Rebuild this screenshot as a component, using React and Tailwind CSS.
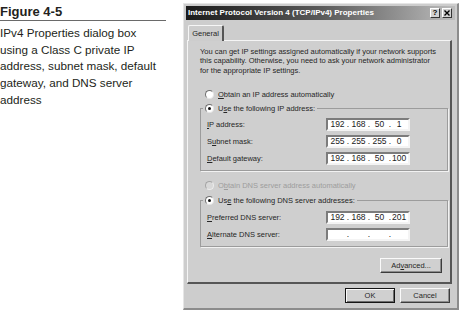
import React from 'react';

const Radio = ({ checked, disabled }) => (
  <span
    className={
      disabled
        ? 'w-[9px] h-[9px] shrink-0 rounded-full bg-[#d8d8d8] border border-[#a5a5a5] border-b-[#ececec] border-r-[#ececec] flex items-center justify-center'
        : 'w-[9px] h-[9px] shrink-0 rounded-full bg-white border border-[#6f6f6f] border-b-[#e6e6e6] border-r-[#e6e6e6] flex items-center justify-center'
    }
  >
    {checked && <span className="w-[3px] h-[3px] rounded-full bg-[#111]" />}
  </span>
);

const Key = ({ children }) => <span className="underline underline-offset-1 decoration-1">{children}</span>;

const IpBox = ({ parts }) => (
  <div className="w-[84px] h-[13px] bg-white border-2 border-t-[#7c7c7c] border-l-[#7c7c7c] border-b-[#f4f4f4] border-r-[#f4f4f4] flex items-center pl-[1px] text-[8.5px] leading-none text-[#222]">
    <span className="w-[17px] text-center">{parts[0]}</span>
    <span className="w-[4px] text-center">.</span>
    <span className="w-[17px] text-center">{parts[1]}</span>
    <span className="w-[4px] text-center">.</span>
    <span className="w-[17px] text-center">{parts[2]}</span>
    <span className="w-[4px] text-center">.</span>
    <span className="w-[14px] text-center">{parts[3]}</span>
  </div>
);

const Row = ({ label, parts }) => (
  <div className="h-[17px] flex items-center pl-[6px]">
    <span className="w-[119px] shrink-0">{label}</span>
    <IpBox parts={parts} />
  </div>
);

const Button = ({ children, primary, className }) => (
  <div
    className={
      primary
        ? `h-[15px] flex items-center justify-center bg-[#d0d0d0] border border-[#151515] shadow-[inset_1px_1px_0_#fafafa,inset_-1px_-1px_0_#6c6c6c] ${className}`
        : `h-[15px] flex items-center justify-center bg-[#d0d0d0] border border-t-[#fafafa] border-l-[#fafafa] border-r-[#3c3c3c] border-b-[#3c3c3c] shadow-[inset_-1px_-1px_0_#8c8c8c] ${className}`
    }
  >
    {children}
  </div>
);

const Caption = () => (
  <div className="w-[183px] shrink-0 pt-[4px] text-[#231f20]">
    <div className="w-[166px] border-b border-[#6a6a6a] text-[13px] leading-[16px] font-bold">Figure 4-5</div>
    <p className="mt-[4px] text-[11.7px] leading-[16.7px]">
      IPv4 Properties dialog box
      <br />
      using a Class C private IP
      <br />
      address, subnet mask, default
      <br />
      gateway, and DNS server
      <br />
      address
    </p>
  </div>
);

const Dialog = () => (
  <div className="mt-[3px] w-[276px] h-[307px] shrink-0 bg-[#cdcdcd] border-l border-t border-[#e6e6e6] border-r-2 border-b-2 border-r-[#8c8c8c] border-b-[#8c8c8c] pt-[2px] px-[2px] flex flex-col text-[7.5px] text-[#262626]">
    {/* title bar */}
    <div className="h-[14px] shrink-0 flex items-center bg-linear-to-r from-[#1c1c1c] via-[#5a5a5a] to-[#bdbdbd] pl-[2px] pr-[3px]">
      <span className="flex-1 text-white font-bold text-[8px] leading-none whitespace-nowrap">
        Internet Protocol Version 4 (TCP/IPv4) Properties
      </span>
      <div className="flex gap-[2px]">
        <div className="w-[10px] h-[10px] bg-[#d2d2d2] border border-t-white border-l-white border-r-[#333] border-b-[#333] flex items-center justify-center text-[8px] font-bold leading-none text-black">
          ?
        </div>
        <div className="w-[10px] h-[10px] bg-[#d2d2d2] border border-t-white border-l-white border-r-[#333] border-b-[#333] flex items-center justify-center">
          <svg width="6" height="6" viewBox="0 0 6 6">
            <path d="M0.5 0.5 L5.5 5.5 M5.5 0.5 L0.5 5.5" stroke="#000" strokeWidth="1.4" />
          </svg>
        </div>
      </div>
    </div>

    {/* tab */}
    <div className="mt-[5px] h-[15px] flex">
      <div className="relative z-10 ml-[2px] w-[36px] h-[16px] bg-[#cdcdcd] border-t border-l border-[#f6f6f6] border-r-2 border-r-[#555] rounded-t-[2px] flex items-center justify-center">
        General
      </div>
    </div>

    {/* panel */}
    <div className="ml-[1px] mr-[3px] bg-[#cfcfcf] border-t border-l border-[#f5f5f5] border-r-2 border-b-2 border-r-[#565656] border-b-[#565656] pt-[6px] pl-[12px] pr-[2px] pb-[9px] flex flex-col">
      <p className="leading-[9.4px] whitespace-nowrap">
        You can get IP settings assigned automatically if your network supports
        <br />
        this capability. Otherwise, you need to ask your network administrator
        <br />
        for the appropriate IP settings.
      </p>

      <div className="mt-[13px] h-[12px] flex items-center gap-[4px] pl-[5px]">
        <Radio />
        <span>
          <Key>O</Key>btain an IP address automatically
        </span>
      </div>

      <fieldset className="mt-[2px] border border-[#9c9c9c] shadow-[1px_1px_0_#f2f2f2] pb-[3px]">
        <legend className="ml-[2px] px-[2px] bg-[#cfcfcf]">
          <span className="h-[12px] flex items-center gap-[4px]">
            <Radio checked />
            <span>
              U<Key>s</Key>e the following IP address:
            </span>
          </span>
        </legend>
        <div className="pt-[2px]">
          <Row label={<><Key>I</Key>P address:</>} parts={['192', '168', '50', '1']} />
          <Row label={<>S<Key>u</Key>bnet mask:</>} parts={['255', '255', '255', '0']} />
          <Row label={<><Key>D</Key>efault gateway:</>} parts={['192', '168', '50', '100']} />
        </div>
      </fieldset>

      <div className="mt-[8px] h-[12px] flex items-center gap-[4px] pl-[5px] text-[#9d9d9d]">
        <Radio disabled />
        <span>
          O<Key>b</Key>tain DNS server address automatically
        </span>
      </div>

      <fieldset className="mt-[3px] border border-[#9c9c9c] shadow-[1px_1px_0_#f2f2f2] pb-[3px]">
        <legend className="ml-[2px] px-[2px] bg-[#cfcfcf]">
          <span className="h-[12px] flex items-center gap-[4px]">
            <Radio checked />
            <span>
              Us<Key>e</Key> the following DNS server addresses:
            </span>
          </span>
        </legend>
        <div className="pt-[3px]">
          <Row label={<><Key>P</Key>referred DNS server:</>} parts={['192', '168', '50', '201']} />
          <Row label={<><Key>A</Key>lternate DNS server:</>} parts={['', '', '', '']} />
        </div>
      </fieldset>

      <div className="mt-[11px] self-end mr-[6px]">
        <Button className="w-[62px]">
          Ad<Key>v</Key>anced...
        </Button>
      </div>
    </div>

    {/* bottom buttons */}
    <div className="mt-[4px] flex justify-end gap-[5px] pr-[5px]">
      <Button primary className="w-[50px]">OK</Button>
      <Button className="w-[50px]">Cancel</Button>
    </div>
  </div>
);

export default function App() {
  return (
    <div className="w-[468px] h-[318px] bg-white flex overflow-hidden font-['Liberation_Sans',Arial,sans-serif]">
      <Caption />
      <Dialog />
    </div>
  );
}
